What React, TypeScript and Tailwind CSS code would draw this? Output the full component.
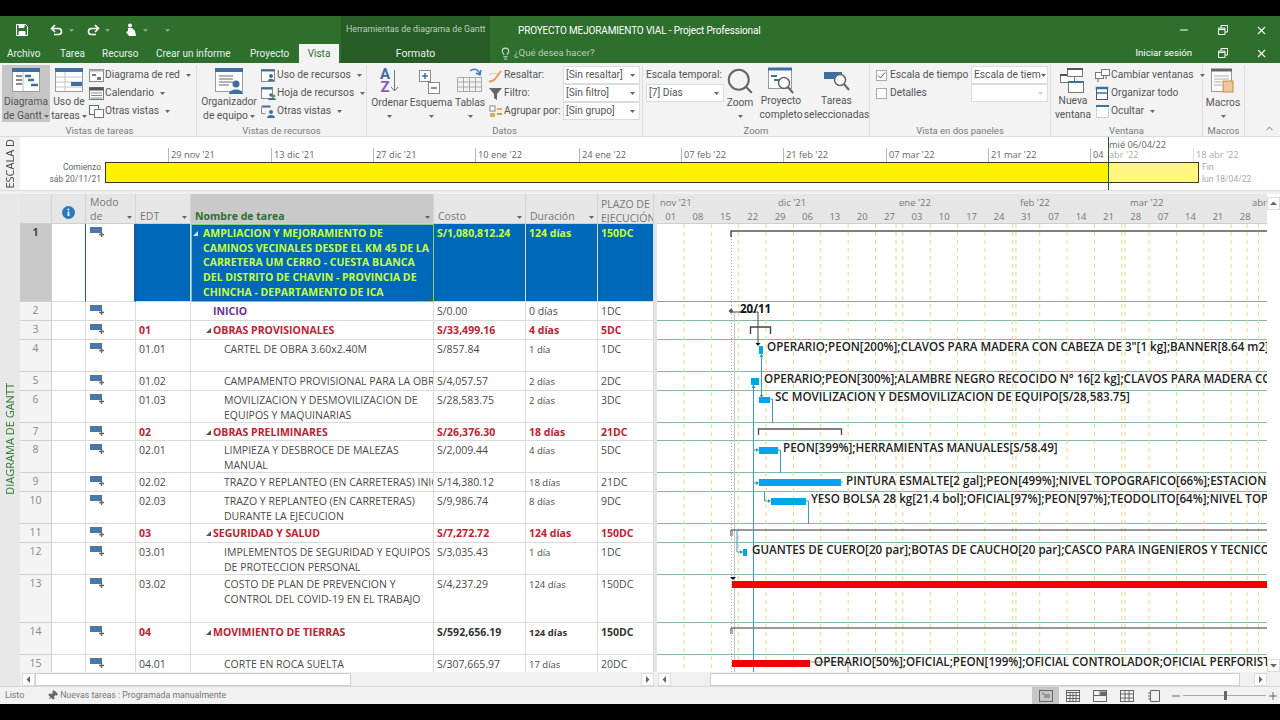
import type { ReactNode } from 'react';
import { ChevronUp, Lightbulb, Minus, Pin, Plus, Search, X } from 'lucide-react';

const Caret = ({ className = '' }: { className?: string }) => (
  <svg width="5" height="3" viewBox="0 0 5 3" className={`shrink-0 ${className}`}>
    <path d="M0 0h5L2.5 3z" fill="#666" />
  </svg>
);

const Restore = () => (
  <svg width="10" height="10" viewBox="0 0 10 10" fill="none" stroke="#fff">
    <path d="M.5 3h6.5v6.5H.5zM3 3V.5h6.5V7H7M.5 4.5H7" />
  </svg>
);

/* ---------- ribbon icons ---------- */

const Sheet = ({ children }: { children?: ReactNode }) => (
  <svg width="30" height="30" viewBox="0 0 30 30">
    <rect x="1.5" y="3.5" width="27" height="23" fill="#fff" stroke="#9a9a9a" />
    <rect x="1" y="3" width="28" height="4" fill="#3f6f9f" />
    {children}
  </svg>
);

const GanttIcon = () => (
  <Sheet>
    <path d="M5 11h6M5 15h6M5 19h6" stroke="#8a8a8a" strokeWidth="2" />
    <path d="M12 7v19" stroke="#bbb" />
    <path d="M14 11h6M17 15h6M20 20h7" stroke="#3f6f9f" strokeWidth="2.5" />
  </Sheet>
);

const TableIcon = () => (
  <Sheet>
    <path d="M2 12h26M2 17h26M2 22h26M11 7v19" stroke="#c4c4c4" />
    <rect x="17" y="17" width="11" height="4" fill="#3f6f9f" />
  </Sheet>
);

const TeamIcon = () => (
  <Sheet>
    <path d="M5 11h14M5 14h14M5 17h14M5 20h10" stroke="#9a9a9a" strokeWidth="1.5" />
    <circle cx="22" cy="19" r="3.5" fill="#3f6f9f" />
    <path d="M15 29c0-6 14-6 14 0z" fill="#3f6f9f" />
  </Sheet>
);

const Mini = ({ kind }: { kind: 'net' | 'cal' | 'views' | 'use' | 'sheet' | 'res' | 'switch' | 'all' | 'hide' }) => (
  <svg width="15" height="15" viewBox="0 0 15 15" fill="none">
    {kind === 'net' && (
      <>
        <rect x=".5" y="1.5" width="14" height="12" fill="#fff" stroke="#888" />
        <path d="M.5 1.5h14v2h-14z" fill="#aaa" />
        <path d="M3 6h4v2H3zM8 9h4v3H8z" fill="#7a7a7a" />
      </>
    )}
    {kind === 'cal' && (
      <>
        <rect x=".5" y="1.5" width="14" height="12" fill="#fff" stroke="#777" />
        <path d="M.5 1.5h14v3h-14z" fill="#555" />
        <path d="M2 7h11M2 9.5h11M2 12h11" stroke="#888" />
      </>
    )}
    {kind === 'views' && (
      <>
        <rect x=".5" y="1.5" width="9" height="9" fill="#fff" stroke="#3f6f9f" />
        <rect x="5.5" y="5.5" width="9" height="8" fill="#fff" stroke="#777" />
      </>
    )}
    {kind === 'use' && (
      <>
        <rect x=".5" y="1.5" width="13" height="12" fill="#fff" stroke="#888" />
        <path d="M.5 1.5h13v2H.5z" fill="#3f6f9f" />
        <circle cx="10" cy="8" r="2" fill="#3f6f9f" />
        <path d="M7 13c0-3 6-3 6 0z" fill="#3f6f9f" />
      </>
    )}
    {kind === 'sheet' && (
      <>
        <rect x=".5" y="1.5" width="11" height="11" fill="#fff" stroke="#888" />
        <path d="M.5 1.5h11v2H.5z" fill="#3f6f9f" />
        <circle cx="10" cy="9" r="1.8" fill="#3f6f9f" />
        <circle cx="13" cy="10" r="1.5" fill="#6e8f4a" />
        <path d="M7 14c0-3 8-3 8 0z" fill="#3f6f9f" />
      </>
    )}
    {kind === 'res' && (
      <>
        <path d="M.5 2.5h9" stroke="#3f6f9f" strokeWidth="2" />
        <path d="M.5 3.500v6h4" stroke="#888" />
        <circle cx="10" cy="8" r="2" fill="#3f6f9f" />
        <path d="M6 14c0-4 8-4 8 0z" fill="#3f6f9f" />
      </>
    )}
    {kind === 'switch' && (
      <>
        <rect x=".5" y="4.5" width="8" height="6" fill="#fff" stroke="#777" />
        <rect x="6.5" y="1.5" width="8" height="6" fill="#fff" stroke="#777" />
        <path d="M3 11v3M11 8v3" stroke="#3f6f9f" />
      </>
    )}
    {kind === 'all' && (
      <>
        <rect x="1.5" y="1.5" width="11" height="12" fill="#fff" stroke="#555" />
        <path d="M1.5 1.5h11v1h-11zM1.5 7h11" stroke="#3f6f9f" strokeWidth="1.5" />
      </>
    )}
    {kind === 'hide' && (
      <>
        <rect x="1.5" y="1.5" width="12" height="12" fill="#fff" stroke="#bbb" strokeDasharray="2 1" />
        <path d="M1 2h13" stroke="#3f6f9f" strokeWidth="2" />
      </>
    )}
  </svg>
);

const BigBtn = ({
  icon,
  lines,
  caret,
  className = '',
}: {
  icon: ReactNode;
  lines: string[];
  caret?: boolean;
  className?: string;
}) => (
  <div className={`flex flex-col items-center shrink-0 h-[57px] leading-[14px] ${className}`}>
    <div className="h-[31px] flex items-center justify-center">{icon}</div>
    {lines.map((l, i) => (
      <div key={l} className="flex items-center gap-[2px] whitespace-nowrap">
        {l}
        {caret && i === lines.length - 1 && lines.length > 1 && <Caret />}
      </div>
    ))}
    {caret && lines.length === 1 && <Caret className="mt-[5px]" />}
  </div>
);

const SmallBtn = ({ icon, label, caret }: { icon: ReactNode; label: string; caret?: boolean }) => (
  <div className="h-[18px] flex items-center gap-[1px] whitespace-nowrap">
    {icon}
    <span>{label}</span>
    {caret && <Caret className="ml-[5px]" />}
  </div>
);

const Select = ({ label, className = '', disabled }: { label?: string; className?: string; disabled?: boolean }) => (
  <div
    className={`h-[18px] flex items-center justify-between pl-[2px] pr-[4px] border border-[#dcdcdc] bg-white whitespace-nowrap overflow-hidden ${className}`}
  >
    <span>{label}</span>
    <Caret className={disabled ? 'opacity-30' : ''} />
  </div>
);

const Group = ({ label, className, children }: { label: string; className: string; children: ReactNode }) => (
  <div className={`flex flex-col shrink-0 border-r border-[#dedede] mt-[2px] h-[72px] ${className}`}>
    <div className="flex-1 flex min-h-0">{children}</div>
    <div className="h-[13px] leading-[13px] text-center text-[9.5px] text-[#7a7a7a]">{label}</div>
  </div>
);

const Ribbon = () => (
  <div className="h-[74px] flex pl-[3px] bg-[#f3f3f3] font-['Roboto',sans-serif] text-[10.25px] text-[#555] border-b border-[#dcdcdc]">
    <Group label="Vistas de tareas" className="w-[194px]">
      <BigBtn icon={<GanttIcon />} lines={['Diagrama', 'de Gantt']} caret className="w-[48px] bg-[#c6c6c6] -ml-[1px] mr-[1px]" />
      <BigBtn icon={<TableIcon />} lines={['Uso de', 'tareas']} caret className="w-[36px]" />
      <div className="ml-[2px] mt-[1px]">
        <SmallBtn icon={<Mini kind="net" />} label="Diagrama de red" caret />
        <SmallBtn icon={<Mini kind="cal" />} label="Calendario" caret />
        <SmallBtn icon={<Mini kind="views" />} label="Otras vistas" caret />
      </div>
    </Group>
    <Group label="Vistas de recursos" className="w-[170px]">
      <BigBtn icon={<TeamIcon />} lines={['Organizador', 'de equipo']} caret className="w-[60px] ml-[2px]" />
      <div className="ml-[2px] mt-[1px]">
        <SmallBtn icon={<Mini kind="use" />} label="Uso de recursos" caret />
        <SmallBtn icon={<Mini kind="sheet" />} label="Hoja de recursos" caret />
        <SmallBtn icon={<Mini kind="res" />} label="Otras vistas" caret />
      </div>
    </Group>
    <Group label="Datos" className="w-[276px]">
      <BigBtn
        icon={
          <div className="flex items-center">
            <div className="text-[15px] leading-[13px] font-bold text-center">
              <div className="text-[#3f6f9f]">A</div>
              <div className="text-[#8c5bb0]">Z</div>
            </div>
            <svg width="9" height="24" viewBox="0 0 9 24" fill="none" stroke="#777">
              <path d="M4.5 1v21M1 18l3.5 4L8 18" />
            </svg>
          </div>
        }
        lines={['Ordenar']}
        caret
        className="w-[41px] ml-[2px]"
      />
      <BigBtn
        icon={
          <svg width="26" height="26" viewBox="0 0 26 26" fill="none">
            <rect x="1.5" y="2.5" width="11" height="11" fill="#fff" stroke="#888" />
            <path d="M4 8h6M7 5v6" stroke="#3f6f9f" strokeWidth="1.5" />
            <rect x="10.5" y="14.5" width="11" height="11" fill="#fff" stroke="#888" />
            <path d="M13 20h6" stroke="#3f6f9f" strokeWidth="1.5" />
          </svg>
        }
        lines={['Esquema']}
        caret
        className="w-[42px]"
      />
      <BigBtn
        icon={
          <svg width="28" height="28" viewBox="0 0 28 28" fill="none">
            <path d="M1.5 10.5h24v14h-24zM1.5 15h24M1.5 20h24M7.5 10v15M13.5 10v15M19.5 10v15" stroke="#aaa" />
            <path d="M14 4c3-3 7-2 9 1l1 3M25 3l-1 5-4-2" stroke="#3f80c4" strokeWidth="1.5" />
          </svg>
        }
        lines={['Tablas']}
        caret
        className="w-[36px]"
      />
      <div className="mt-[1px] mr-[1px] w-[74px]">
        <SmallBtn
          icon={
            <svg width="15" height="15" viewBox="0 0 15 15" fill="none">
              <path d="M1 13c2 1 4 0 6-2l6-8" stroke="#e8a060" strokeWidth="2" />
              <path d="M1 7c3-2 6-2 9-1" stroke="#e8c0a0" />
            </svg>
          }
          label="Resaltar:"
        />
        <SmallBtn
          icon={
            <svg width="15" height="15" viewBox="0 0 15 15">
              <path d="M1 2h13L9 8v6l-3-2V8z" fill="#666" />
            </svg>
          }
          label="Filtro:"
        />
        <SmallBtn
          icon={
            <svg width="15" height="15" viewBox="0 0 15 15">
              <rect x="2" y="2" width="5" height="5" fill="#fff" stroke="#888" />
              <rect x="2" y="9" width="5" height="4" fill="#e0b050" />
              <rect x="9" y="4" width="5" height="2" fill="#e0b050" />
              <rect x="9" y="9" width="5" height="2" fill="#c9a050" />
            </svg>
          }
          label="Agrupar por:"
        />
      </div>
      <div className="mt-[1px] w-[77px]">
        <Select label="[Sin resaltar]" />
        <Select label="[Sin filtro]" />
        <Select label="[Sin grupo]" />
      </div>
    </Group>
    <Group label="Zoom" className="w-[227px]">
      <div className="ml-[3px] mt-[1px] w-[78px]">
        <div className="h-[18px] leading-[18px] whitespace-nowrap">Escala temporal:</div>
        <Select label="[7] Días" />
      </div>
      <BigBtn icon={<Search size={30} strokeWidth={1.6} color="#666" />} lines={['Zoom']} caret className="w-[32px]" />
      <BigBtn
        icon={
          <svg width="28" height="28" viewBox="0 0 28 28" fill="none">
            <rect x="1.5" y="2.5" width="23" height="20" fill="#fff" stroke="#999" />
            <path d="M1 3h24" stroke="#3f6f9f" strokeWidth="3" />
            <path d="M4 10h6M7 14h5" stroke="#3f6f9f" strokeWidth="2" />
            <circle cx="17" cy="17" r="5.5" fill="#fff" stroke="#666" strokeWidth="1.5" />
            <path d="M21 21l5 6" stroke="#666" strokeWidth="2" />
          </svg>
        }
        lines={['Proyecto', 'completo']}
        className="w-[44px] ml-[3px]"
      />
      <BigBtn
        icon={
          <svg width="28" height="28" viewBox="0 0 28 28" fill="none">
            <path d="M1 6h18v7H1z" fill="#3f6f9f" />
            <circle cx="17" cy="14" r="5.5" fill="#fff" stroke="#666" strokeWidth="1.5" />
            <path d="M21 18l5 6" stroke="#666" strokeWidth="2" />
          </svg>
        }
        lines={['Tareas', 'seleccionadas']}
        className="w-[65px] ml-[1px]"
      />
    </Group>
    <Group label="Vista en dos paneles" className="w-[181px]">
      <div className="ml-[6px] mt-[1px] w-[95px]">
        <div className="h-[18px] flex items-center gap-[3px] whitespace-nowrap">
          <span className="w-[11px] h-[11px] border border-[#aaa] bg-white flex items-center justify-center">
            <svg width="9" height="9" viewBox="0 0 9 9" fill="none" stroke="#555">
              <path d="M1 4.5l2.5 2.5L8 1.5" />
            </svg>
          </span>
          Escala de tiempo
        </div>
        <div className="h-[18px] flex items-center gap-[3px]">
          <span className="w-[11px] h-[11px] border border-[#aaa] bg-white" />
          Detalles
        </div>
      </div>
      <div className="mt-[1px] w-[77px]">
        <Select label="Escala de tiem" />
        <Select disabled className="bg-[#f1f1f1]" />
      </div>
    </Group>
    <Group label="Ventana" className="w-[152px]">
      <BigBtn
        icon={
          <svg width="28" height="28" viewBox="0 0 28 28" fill="none">
            <rect x="1.5" y="8.5" width="14" height="8" fill="#fff" stroke="#777" />
            <path d="M1 9h15" stroke="#555" strokeWidth="2" />
            <rect x="8.5" y="2.5" width="15" height="8" fill="#fff" stroke="#777" />
            <path d="M8 3h16" stroke="#555" strokeWidth="2" />
            <rect x="9.5" y="15.5" width="15" height="11" fill="#fff" stroke="#777" />
            <path d="M9 16h16" stroke="#3f6f9f" strokeWidth="2" />
          </svg>
        }
        lines={['Nueva', 'ventana']}
        className="w-[40px] ml-[2px]"
      />
      <div className="ml-[2px] mt-[1px]">
        <SmallBtn icon={<Mini kind="switch" />} label="Cambiar ventanas" caret />
        <SmallBtn icon={<Mini kind="all" />} label="Organizar todo" />
        <SmallBtn icon={<Mini kind="hide" />} label="Ocultar" caret />
      </div>
    </Group>
    <Group label="Macros" className="w-[42px]">
      <BigBtn
        icon={
          <svg width="28" height="28" viewBox="0 0 28 28" fill="none">
            <rect x="2.5" y="2.5" width="20" height="22" fill="#fff" stroke="#999" />
            <path d="M2 3h21" stroke="#666" strokeWidth="3" />
            <path d="M5 9h15M5 12h15M5 15h8M5 18h8" stroke="#aaa" />
            <rect x="14" y="14" width="10" height="11" fill="#f0c79a" stroke="#c98a50" />
          </svg>
        }
        lines={['Macros']}
        caret
        className="w-[40px]"
      />
    </Group>
    <div className="flex-1 flex justify-end items-end pb-[2px] pr-[5px]">
      <ChevronUp size={11} color="#666" />
    </div>
  </div>
);

/* ---------- title bar ---------- */

const TitleBar = () => (
  <div className="h-[47px] flex bg-[#2f6f2e] text-[#e6f0e6] font-['Roboto',sans-serif] text-[9.6px]">
    <div className="w-[341px] flex flex-col">
      <div className="h-[28px] flex items-center pl-[16px]">
        <svg width="12" height="12" viewBox="0 0 12 12" fill="none" stroke="#fff">
          <path d="M.5.5h9l2 2v9H.5z" />
          <path d="M3 7.5h6v4H3zM3 .5h5v3H3z" fill="#fff" />
        </svg>
        <svg width="14" height="12" viewBox="0 0 14 12" fill="none" stroke="#fff" strokeWidth="1.6" className="ml-[22px]">
          <path d="M1.5 4.5h7c4 0 4 6 0 6H4M5 1L1.5 4.5 5 8" />
        </svg>
        <Caret className="ml-[5px] invert" />
        <svg width="14" height="12" viewBox="0 0 14 12" fill="none" stroke="#fff" strokeWidth="1.6" className="ml-[12px]">
          <path d="M12.5 4.5h-7c-4 0-4 6 0 6H10M9 1l3.5 3.5L9 8" />
        </svg>
        <Caret className="ml-[5px] invert" />
        <svg width="13" height="14" viewBox="0 0 13 14" fill="#fff" className="ml-[15px]">
          <circle cx="5" cy="2.5" r="2" />
          <path d="M3 5h4l3 3 1 5H4L1 9l2-1z" />
        </svg>
        <Caret className="ml-[5px] invert" />
        <Caret className="ml-[17px] invert" />
      </div>
      <div className="h-[19px] flex items-center text-[10px] whitespace-nowrap">
        <span className="w-[60px] pl-[7px]">Archivo</span>
        <span className="w-[42px]">Tarea</span>
        <span className="w-[54px]">Recurso</span>
        <span className="w-[94px]">Crear un informe</span>
        <span className="w-[49px]">Proyecto</span>
        <span className="h-full w-[40px] bg-[#f3f3f3] text-[#2f6f2e] text-center leading-[20px]">Vista</span>
      </div>
    </div>
    <div className="w-[149px] flex flex-col bg-[#275c27]">
      <div className="h-[28px] flex items-center pl-[5px] text-[8.8px] text-[#bcd0bc] whitespace-nowrap">
        Herramientas de diagrama de Gantt
      </div>
      <div className="h-[19px] flex items-center justify-center text-[10.5px]">Formato</div>
    </div>
    <div className="flex-1 flex flex-col">
      <div className="h-[28px] flex items-center pl-[28px]">
        <span className="text-[10px] tracking-[-0.15px] text-white">PROYECTO MEJORAMIENTO VIAL - Project Professional</span>
        <div className="ml-auto flex items-center pr-[12px]">
          <Minus size={12} color="#fff" />
          <span className="ml-[28px]">
            <Restore />
          </span>
          <X size={13} color="#fff" className="ml-[27px]" />
        </div>
      </div>
      <div className="h-[19px] flex items-center pl-[9px]">
        <Lightbulb size={13} color="#cfe0cf" />
        <span className="ml-[2px] text-[#b8cfb8]">¿Qué desea hacer?</span>
        <div className="ml-auto flex items-center pr-[12px]">
          <span className="text-white">Iniciar sesión</span>
          <span className="ml-[26px]">
            <Restore />
          </span>
          <X size={13} color="#fff" className="ml-[27px]" />
        </div>
      </div>
    </div>
  </div>
);

/* ---------- timeline strip ---------- */

const timelineTicks: [string, string][] = [
  ['left-[148px]', "29 nov '21"],
  ['left-[251px]', "13 dic '21"],
  ['left-[353px]', "27 dic '21"],
  ['left-[455px]', "10 ene '22"],
  ['left-[559px]', "24 ene '22"],
  ['left-[661px]', "07 feb '22"],
  ['left-[763px]', "21 feb '22"],
  ['left-[866px]', "07 mar '22"],
  ['left-[968px]', "21 mar '22"],
];

const Timeline = () => (
  <div className="h-[54px] flex bg-white text-[9.25px] text-[#666] border-b border-[#dcdcdc]">
    <div className="w-[20px] bg-[#f0f0f0] flex items-center justify-center overflow-hidden">
      <span className="[writing-mode:vertical-rl] rotate-180 text-[11px] text-[#444] whitespace-nowrap">ESCALA D</span>
    </div>
    <div className="relative flex-1 flex items-end pb-[7px]">
      {timelineTicks.map(([pos, label]) => (
        <span key={label} className={`absolute top-[11px] h-[14px] leading-[13px] pl-[2px] border-l border-[#b8b8b8] whitespace-nowrap ${pos}`}>
          {label}
        </span>
      ))}
      <span className="absolute top-[11px] left-[1070px] h-[14px] leading-[13px] pl-[2px] border-l border-[#b8b8b8] whitespace-nowrap">
        04 <span className="text-[#aaa] ml-[3px]">abr '22</span>
      </span>
      <span className="absolute top-[11px] left-[1173px] h-[14px] leading-[13px] pl-[2px] border-l border-[#ddd] text-[#aaa] whitespace-nowrap">
        18 abr '22
      </span>
      <span className="absolute top-[1px] left-[1089px] leading-[13px] whitespace-nowrap">mié 06/04/22</span>
      <div className="absolute top-0 bottom-0 left-[1088px] w-[1px] bg-[#1e5a32]" />
      <div className="w-[85px] text-right pr-[4px] leading-[12px] font-['Roboto',sans-serif] text-[8.5px] -mb-[2px]">
        <div>Comienzo</div>
        <div>sáb 20/11/21</div>
      </div>
      <div className="w-[1094px] h-[21px] flex border border-[#3a3a1a] shrink-0">
        <div className="flex-1 bg-[#fff200]" />
        <div className="w-[90px] bg-[#fff77f]" />
      </div>
      <div className="pl-[3px] leading-[12px] text-[#aaa] whitespace-nowrap font-['Roboto',sans-serif] text-[8.5px] -mb-[2px]">
        <div>Fin</div>
        <div>lun 18/04/22</div>
      </div>
    </div>
  </div>
);

/* ---------- task table ---------- */

type Kind = 'top' | 'milestone' | 'group' | 'leaf';

type Task = {
  n: number;
  h: string;
  edt?: string;
  name: string[];
  cost: string;
  dur: string;
  plazo: string;
  kind: Kind;
  smallDur?: boolean;
  dark?: boolean;
};

const tasks: Task[] = [
  {
    n: 1,
    h: 'h-[78px]',
    name: [
      'AMPLIACION Y MEJORAMIENTO DE',
      'CAMINOS VECINALES DESDE EL KM 45 DE LA',
      'CARRETERA UM CERRO - CUESTA BLANCA',
      'DEL DISTRITO DE CHAVIN - PROVINCIA DE',
      'CHINCHA - DEPARTAMENTO DE ICA',
    ],
    cost: 'S/1,080,812.24',
    dur: '124 días',
    plazo: '150DC',
    kind: 'top',
  },
  { n: 2, h: 'h-[19px]', name: ['INICIO'], cost: 'S/0.00', dur: '0 días', plazo: '1DC', kind: 'milestone' },
  { n: 3, h: 'h-[19px]', edt: '01', name: ['OBRAS PROVISIONALES'], cost: 'S/33,499.16', dur: '4 días', plazo: '5DC', kind: 'group' },
  { n: 4, h: 'h-[32px]', edt: '01.01', name: ['CARTEL DE OBRA 3.60x2.40M'], cost: 'S/857.84', dur: '1 día', plazo: '1DC', kind: 'leaf', smallDur: true },
  { n: 5, h: 'h-[19px]', edt: '01.02', name: ['CAMPAMENTO PROVISIONAL PARA LA OBRA'], cost: 'S/4,057.57', dur: '2 días', plazo: '2DC', kind: 'leaf', smallDur: true },
  { n: 6, h: 'h-[32px]', edt: '01.03', name: ['MOVILIZACION Y DESMOVILIZACION DE', 'EQUIPOS Y MAQUINARIAS'], cost: 'S/28,583.75', dur: '2 días', plazo: '3DC', kind: 'leaf', smallDur: true },
  { n: 7, h: 'h-[18px]', edt: '02', name: ['OBRAS PRELIMINARES'], cost: 'S/26,376.30', dur: '18 días', plazo: '21DC', kind: 'group' },
  { n: 8, h: 'h-[32px]', edt: '02.01', name: ['LIMPIEZA Y DESBROCE DE MALEZAS', 'MANUAL'], cost: 'S/2,009.44', dur: '4 días', plazo: '5DC', kind: 'leaf', smallDur: true },
  { n: 9, h: 'h-[19px]', edt: '02.02', name: ['TRAZO Y REPLANTEO (EN CARRETERAS) INICIAL'], cost: 'S/14,380.12', dur: '18 días', plazo: '21DC', kind: 'leaf', smallDur: true },
  { n: 10, h: 'h-[32px]', edt: '02.03', name: ['TRAZO Y REPLANTEO (EN CARRETERAS)', 'DURANTE LA EJECUCION'], cost: 'S/9,986.74', dur: '8 días', plazo: '9DC', kind: 'leaf', smallDur: true },
  { n: 11, h: 'h-[19px]', edt: '03', name: ['SEGURIDAD Y SALUD'], cost: 'S/7,272.72', dur: '124 días', plazo: '150DC', kind: 'group' },
  { n: 12, h: 'h-[32px]', edt: '03.01', name: ['IMPLEMENTOS DE SEGURIDAD Y EQUIPOS', 'DE PROTECCION PERSONAL'], cost: 'S/3,035.43', dur: '1 día', plazo: '1DC', kind: 'leaf', smallDur: true },
  { n: 13, h: 'h-[48px]', edt: '03.02', name: ['COSTO DE PLAN DE PREVENCION Y', 'CONTROL DEL COVID-19 EN EL TRABAJO'], cost: 'S/4,237.29', dur: '124 días', plazo: '150DC', kind: 'leaf', smallDur: true },
  { n: 14, h: 'h-[32px]', edt: '04', name: ['MOVIMIENTO DE TIERRAS'], cost: 'S/592,656.19', dur: '124 días', plazo: '150DC', kind: 'group', dark: true, smallDur: true },
  { n: 15, h: 'h-[32px]', edt: '04.01', name: ['CORTE EN ROCA SUELTA'], cost: 'S/307,665.97', dur: '17 días', plazo: '20DC', kind: 'leaf', smallDur: true },
];

const ModeIcon = () => (
  <svg width="15" height="10" viewBox="0 0 15 10" className="mt-[1px] ml-[1px]">
    <rect x="0" y="0" width="12" height="6" fill="#4a77a8" />
    <path d="M9 7.500h5M11.500 5v5" stroke="#666" strokeWidth="1.4" />
  </svg>
);

const Tri = ({ light }: { light?: boolean }) => (
  <svg width="5" height="5" viewBox="0 0 5 5" className="shrink-0 mt-[5px] mr-[2px]">
    <path d="M5 0v5H0z" fill={light ? '#cfe8ff' : '#555'} />
  </svg>
);

const cell = 'shrink-0 pt-[2px] px-[3px] leading-[15px] whitespace-nowrap overflow-hidden border-r border-b border-[#dadada]';

const TaskRow = ({ t }: { t: Task }) => {
  const sel = t.kind === 'top';
  const bold = t.kind === 'group' || sel;
  const edtColor = t.kind === 'group' ? 'text-[#c3202f]' : 'text-[#4a4a4a]';
  const color = t.dark ? 'text-[#333]' : edtColor;
  const vals = sel ? 'bg-[#0068b8] text-[#c8ff3c] font-bold border-[#9cc6e4]' : `${color} ${bold ? 'font-bold' : ''}`;
  return (
    <div className={`flex ${t.h} bg-white`}>
      <div
        className={`w-[32px] shrink-0 text-center leading-[15px] pt-[1px] border-r border-b border-[#cfcfcf] ${
          sel ? 'bg-[#c8c8c8] font-bold text-[#444]' : 'bg-[#f4f4f4] text-[#888]'
        }`}
      >
        {t.n}
      </div>
      <div className={`${cell} w-[34px] ${sel ? 'border-r-[#1c5c98]' : ''}`} />
      <div className={`${cell} w-[50px] ${sel ? 'border-r-2 border-r-[#1c5c98]' : ''}`}>
        <ModeIcon />
      </div>
      <div className={`${cell} w-[55px] ${sel ? 'bg-[#0068b8]' : edtColor} ${bold ? 'font-bold' : ''}`}>{t.edt}</div>
      <div
        className={`shrink-0 w-[243px] overflow-hidden whitespace-nowrap leading-[14.7px] border-b border-r ${
          sel ? 'relative bg-[#0068b8] border border-[#8cc98c] text-[#c8ff3c] font-bold pl-[1px] pt-[1px] flex' : 'border-[#dadada] pt-[2px]'
        } ${t.kind === 'milestone' ? 'pl-[22px] text-[#6b2fa0] font-bold' : ''} ${
          t.kind === 'group' ? 'pl-[15px] flex font-bold text-[#c3202f]' : ''
        } ${t.kind === 'leaf' ? 'pl-[33px] text-[#4a4a4a]' : ''}`}
      >
        {(sel || t.kind === 'group') && <Tri light={sel} />}
        <div className={sel ? 'pl-[3px]' : ''}>
          {t.name.map((l) => (
            <div key={l}>{l}</div>
          ))}
        </div>
        {sel && <span className="absolute right-0 bottom-0 w-[4px] h-[4px] bg-[#2f6f2e]" />}
      </div>
      <div className={`${cell} w-[92px] ${vals}`}>{t.cost}</div>
      <div className={`${cell} w-[72px] ${vals} ${t.smallDur ? 'text-[9.5px]' : ''}`}>{t.dur}</div>
      <div className={`${cell} w-[56px] ${vals}`}>{t.plazo}</div>
    </div>
  );
};

const HeadCell = ({ lines, className, caret = true }: { lines: string[]; className: string; caret?: boolean }) => (
  <div className={`relative shrink-0 h-full flex flex-col px-[4px] border-r border-[#d4d4d4] overflow-hidden whitespace-nowrap leading-[14px] ${className}`}>
    {lines.map((l) => (
      <div key={l}>{l}</div>
    ))}
    {caret && <Caret className="absolute right-[3px] bottom-[4px]" />}
  </div>
);

const TaskTable = () => (
  <div className="w-[634px] shrink-0 flex flex-col min-h-0 text-[10.5px]">
    <div className="h-[30px] flex bg-[#e6e6e6] text-[#777] shrink-0 border-b border-[#cfcfcf]">
      <div className="w-[32px] h-full shrink-0 border-r border-[#d4d4d4]" />
      <div className="w-[34px] h-full shrink-0 flex items-end justify-center pb-[4px] border-r border-[#d4d4d4]">
        <svg width="13" height="13" viewBox="0 0 13 13">
          <circle cx="6.5" cy="6.5" r="6.5" fill="#2b78c0" />
          <path d="M6.5 5.5v4.5" stroke="#fff" strokeWidth="1.8" />
          <circle cx="6.5" cy="3.4" r="1" fill="#fff" />
        </svg>
      </div>
      <HeadCell lines={['Modo', 'de']} className="w-[50px] justify-end" />
      <HeadCell lines={['EDT']} className="w-[55px] justify-end" />
      <HeadCell lines={['Nombre de tarea']} className="w-[243px] justify-end bg-[#c9c9c9] text-[#2f6f2e] font-bold" />
      <HeadCell lines={['Costo']} className="w-[92px] justify-end" />
      <HeadCell lines={['Duración']} className="w-[72px] justify-end" />
      <HeadCell lines={['PLAZO DE', 'EJECUCIÓN']} className="w-[56px] justify-start pt-[3px] pl-[3px] pr-0" caret={false} />
    </div>
    <div className="flex-1 min-h-0 overflow-hidden">
      {tasks.map((t) => (
        <TaskRow key={t.n} t={t} />
      ))}
    </div>
  </div>
);

/* ---------- gantt chart ---------- */

const weekLabels = ['01', '08', '15', '22', '29', '06', '13', '20', '27', '03', '10', '17', '24', '31', '07', '14', '21', '28', '07', '14', '21', '28'];
const weekLines = weekLabels.map((_, i) => 684 + i * 27.36);
const monthLines = [896, 1016, 1125, 1247];

const bars = [
  { x: 759, y: 346, w: 4, h: 8, c: '#00a6e8' },
  { x: 751, y: 378, w: 8, h: 7, c: '#00a6e8' },
  { x: 759, y: 397, w: 11, h: 6, c: '#00a6e8' },
  { x: 759, y: 447, w: 19, h: 7, c: '#00a6e8' },
  { x: 759, y: 479, w: 82, h: 7, c: '#00a6e8' },
  { x: 771, y: 498, w: 35, h: 7, c: '#00a6e8' },
  { x: 743, y: 549, w: 4, h: 7, c: '#00a6e8' },
  { x: 732, y: 581, w: 535, h: 7, c: '#f30000' },
  { x: 732, y: 660, w: 78, h: 7, c: '#f30000' },
];

const labels: [number, number, string][] = [
  [767, 351, 'OPERARIO;PEON[200%];CLAVOS PARA MADERA CON CABEZA DE 3"[1 kg];BANNER[8.64 m2];'],
  [764, 383, 'OPERARIO;PEON[300%];ALAMBRE NEGRO RECOCIDO N° 16[2 kg];CLAVOS PARA MADERA CON CABEZA'],
  [775, 401, 'SC MOVILIZACION Y DESMOVILIZACION DE EQUIPO[S/28,583.75]'],
  [783, 452, 'PEON[399%];HERRAMIENTAS MANUALES[S/58.49]'],
  [846, 485, 'PINTURA ESMALTE[2 gal];PEON[499%];NIVEL TOPOGRAFICO[66%];ESTACION TOTAL'],
  [811, 503, 'YESO BOLSA 28 kg[21.4 bol];OFICIAL[97%];PEON[97%];TEODOLITO[64%];NIVEL TOPOGRAFICO'],
  [752, 554, 'GUANTES DE CUERO[20 par];BOTAS DE CAUCHO[20 par];CASCO PARA INGENIEROS Y TECNICOS'],
  [814, 666, 'OPERARIO[50%];OFICIAL;PEON[199%];OFICIAL CONTROLADOR;OFICIAL PERFORISTA'],
];

const GanttChart = () => (
  <div className="flex-1 min-w-0 flex flex-col">
    <div className="h-[30px] shrink-0 bg-[#e6e6e6] text-[9.5px] text-[#777] flex flex-col pt-[1px] border-b border-[#cfcfcf]">
      <div className="h-[15px] flex items-center leading-none">
        <span className="w-[121px] pl-[3px]">nov '21</span>
        <span className="w-[121px]">dic '21</span>
        <span className="w-[121px]">ene '22</span>
        <span className="w-[110px]">feb '22</span>
        <span className="w-[122px]">mar '22</span>
        <span>abr</span>
      </div>
      <div className="flex-1 flex items-center">
        {weekLabels.map((w, i) => (
          <span key={i} className="w-[27.36px] shrink-0 text-center leading-none">
            {w}
          </span>
        ))}
      </div>
    </div>
    <div className="relative flex-1 min-h-0 overflow-hidden bg-white">
      <div>
        {tasks.map((t, i) => (
          <div key={t.n} className={`${t.h} border-b ${i === 0 ? 'border-[#9a9a9a]' : 'border-[#83b8a8]'}`} />
        ))}
      </div>
      <svg width="610" height="448" viewBox="657 224 610 448" className="absolute left-0 top-0" fontFamily="Open Sans, sans-serif">
        {[...weekLines, ...monthLines].map((x) => (
          <path key={x} d={`M${x} 224V672`} stroke="#e9d58c" strokeDasharray="4 4" />
        ))}
        <path d="M731.5 236V672" stroke="#aaa" strokeDasharray="1 2" />
        <path d="M734.5 312V672" stroke="#c4c4c4" />

        {/* summary brackets */}
        <path d="M731 237v-6h536" fill="none" stroke="#555" strokeWidth="1.6" />
        <path d="M750.5 334v-7h20v7" fill="none" stroke="#444" strokeWidth="1.4" />
        <path d="M758.5 435v-6h83v6" fill="none" stroke="#555" strokeWidth="1.4" />
        <path d="M731 536v-6h536" fill="none" stroke="#333" />
        <path d="M731 634v-6h536" fill="none" stroke="#333" />
        <path d="M732 536v-5M732 634v-5" stroke="#aaa" strokeWidth="2" />

        {/* milestone and its links */}
        <path d="M731 312h27v32" fill="none" stroke="#444" />
        <path d="M731 308.5l2.5 2.5-2.5 2.5-2.5-2.5z" fill="#555" />
        <path d="M755.5 343h5l-2.5 3z" fill="#111" />
        <path d="M730 577h6l-3 3z" fill="#111" />

        {/* task links */}
        <g fill="none" stroke="#3d9db8">
          <path d="M753.5 385V672" />
          <path d="M761.5 354V397" />
          <path d="M770 399h2.500v24" />
          <path d="M778 450h2.500v23" />
          <path d="M841 482h2" />
          <path d="M764.500 492v9h6" />
          <path d="M806 501h2.500v23" />
          <path d="M737 530v22h6" />
          <path d="M753.500 450h5M753.500 483h5" />
          <path d="M810 662h38v10" stroke="#999" />
        </g>
        <path d="M751.500 388l2-3 2 3zM759.500 357l2-3 2 3z" fill="#2f8fb0" />
        <path d="M759.500 395h4l-2 2.500zM756 448v4l2.500-2zM756 481v4l2.500-2zM768 499v4l2.500-2zM740 550v4l2.500-2z" fill="#2f8fb0" />

        {bars.map((b) => (
          <rect key={b.y} x={b.x} y={b.y} width={b.w} height={b.h} fill={b.c} />
        ))}

        <text x="740" y="313" fontSize="11.5" fontWeight="700" fill="#111">
          20/11
        </text>
        {labels.map(([x, y, s]) => (
          <text key={s} x={x} y={y} fontSize="11.6" fontWeight="600" fill="#222">
            {s}
          </text>
        ))}
      </svg>
    </div>
  </div>
);

/* ---------- scrollbars and status ---------- */

const ArrowBox = ({ d, className = '' }: { d: string; className?: string }) => (
  <div className={`w-[13px] h-[13px] shrink-0 bg-white border border-[#dcdcdc] flex items-center justify-center ${className}`}>
    <svg width="7" height="7" viewBox="0 0 7 7">
      <path d={d} fill="#666" />
    </svg>
  </div>
);

const ViewIcon = ({ children, active }: { children: ReactNode; active?: boolean }) => (
  <div className={`w-[27px] h-full flex items-center justify-center ${active ? 'bg-[#c6c6c6]' : ''}`}>
    <svg width="14" height="12" viewBox="0 0 14 12" fill="none" stroke="#666">
      {children}
    </svg>
  </div>
);

export default function App() {
  return (
    <div className="w-[1280px] h-[720px] flex flex-col bg-black font-['Open_Sans',sans-serif] overflow-hidden">
      <div className="h-[16px] shrink-0" />
      <div className="flex-1 min-h-0 flex flex-col bg-[#ececec]">
        <TitleBar />
        <Ribbon />
        <Timeline />
        <div className="h-[3px] shrink-0 bg-[#f0f0f0]" />
        <div className="flex-1 min-h-0 flex">
          <div className="w-[20px] shrink-0 bg-[#e8e8e8] flex items-center justify-center pb-[2px]">
            <span className="[writing-mode:vertical-rl] rotate-180 text-[11px] text-[#2f7a2f] whitespace-nowrap">DIAGRAMA DE GANTT</span>
          </div>
          <div className="flex-1 min-w-0 flex flex-col">
            <div className="flex-1 min-h-0 flex">
              <TaskTable />
              <div className="w-[3px] shrink-0 bg-[#e4e4e4]" />
              <GanttChart />
              <div className="w-[13px] shrink-0 flex flex-col pt-[3px] bg-white">
                <ArrowBox d="M0 5l3.500-3.500L7 5z" />
                <div className="flex-1" />
                <ArrowBox d="M0 2l3.500 3.500L7 2z" />
              </div>
            </div>
            <div className="h-[14px] shrink-0 flex bg-[#f0f0f0] items-center">
              <div className="w-[634px] shrink-0 flex items-center pl-[2px]">
                <ArrowBox d="M5 0v7L1.500 3.500z" />
                <div className="w-[316px] h-[13px] bg-white border border-[#cfcfcf]" />
                <div className="flex-1" />
                <ArrowBox d="M2 0v7l3.500-3.500z" />
              </div>
              <div className="w-[3px] shrink-0" />
              <div className="w-[610px] shrink-0 flex items-center pl-[1px]">
                <ArrowBox d="M5 0v7L1.500 3.500z" />
                <div className="w-[39px]" />
                <div className="w-[530px] h-[13px] bg-white border border-[#cfcfcf]" />
                <div className="flex-1" />
                <ArrowBox d="M2 0v7l3.500-3.500z" />
              </div>
            </div>
          </div>
        </div>
        <div className="h-[18px] shrink-0 flex items-center bg-[#f1f1f1] border-t border-[#d8d8d8] font-['Roboto',sans-serif] text-[8.75px] text-[#777]">
          <span className="ml-[5px]">Listo</span>
          <Pin size={11} fill="#666" color="#666" className="ml-[23px] rotate-45" />
          <span className="ml-[2px]">Nuevas tareas : Programada manualmente</span>
          <div className="ml-auto h-full flex items-center pr-[1px]">
            <ViewIcon active>
              <rect x=".5" y=".5" width="13" height="11" />
              <path d="M3 3l3 2h5M5 7h6" />
            </ViewIcon>
            <ViewIcon>
              <rect x=".5" y=".5" width="13" height="11" />
              <path d="M0 2.500h14M.5 5.500h13M.5 8.500h13M4 3v8M7 3v8M10 3v8" />
            </ViewIcon>
            <ViewIcon>
              <rect x=".5" y=".5" width="13" height="11" />
              <path d="M.5 5.500h13M7 .5v5" />
              <path d="M8 2h5v3H8z" fill="#666" />
            </ViewIcon>
            <ViewIcon>
              <rect x=".5" y=".5" width="13" height="11" />
              <path d="M.5 4h13M.5 8h13M5 .5v11M9 .5v11" />
            </ViewIcon>
            <ViewIcon>
              <path d="M3.500.5h9v11h-9zM3.500 3H1M3.500 6H1M3.500 9H1" />
            </ViewIcon>
            <Minus size={12} color="#666" className="ml-[3px]" />
            <div className="relative w-[83px] h-[1px] bg-[#aaa] mx-[1px]">
              <span className="absolute left-[41px] -top-[4px] w-[3px] h-[9px] bg-[#666]" />
            </div>
            <Plus size={12} color="#666" />
          </div>
        </div>
      </div>
      <div className="h-[16px] shrink-0" />
    </div>
  );
}
